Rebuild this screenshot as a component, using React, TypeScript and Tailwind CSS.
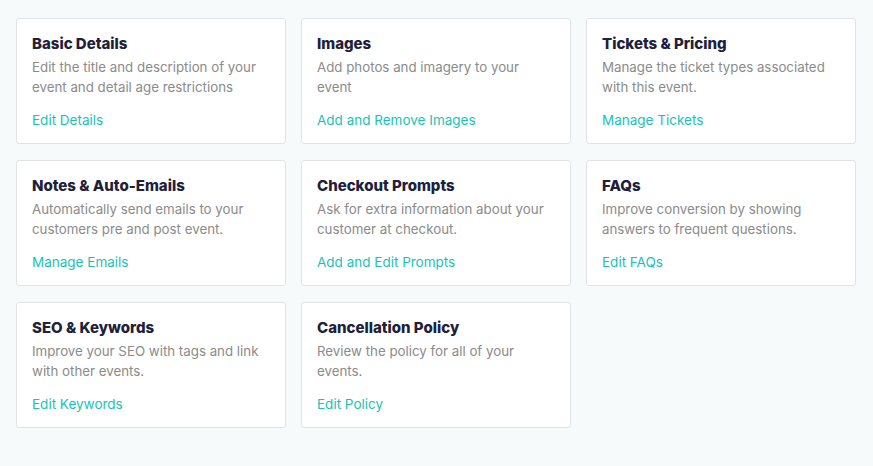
import React from "react";

const cards = [
  { t: "Basic Details", d: "Edit the title and description of your event and detail age restrictions", l: "Edit Details" },
  { t: "Images", d: "Add photos and imagery to your event", l: "Add and Remove Images" },
  { t: "Tickets & Pricing", d: "Manage the ticket types associated with this event.", l: "Manage Tickets" },
  { t: "Notes & Auto-Emails", d: "Automatically send emails to your customers pre and post event.", l: "Manage Emails" },
  { t: "Checkout Prompts", d: "Ask for extra information about your customer at checkout.", l: "Add and Edit Prompts" },
  { t: "FAQs", d: "Improve conversion by showing answers to frequent questions.", l: "Edit FAQs" },
  { t: "SEO & Keywords", d: "Improve your SEO with tags and link with other events.", l: "Edit Keywords" },
  { t: "Cancellation Policy", d: "Review the policy for all of your events.", l: "Edit Policy" },
];

export default function App() {
  return (
    <div className="w-[873px] h-[466px] bg-[#f7fafb] pl-4 pt-[18px] font-['Inter',sans-serif]">
      <div className="grid grid-cols-[270px_270px_270px] gap-x-[15px] gap-y-4">
        {cards.map((c) => (
          <div key={c.t} className="h-[126px] rounded-[3px] border border-[#e1e4e7] bg-white px-[15px] pt-[15px] flex flex-col">
            <div className="text-[15px] leading-5 font-extrabold text-[#20203a]">{c.t}</div>
            <div className="mt-[3px] text-[13.3px] leading-5 text-[#8b8b8b]">{c.d}</div>
            <div className="mt-[13px] text-[13.5px] leading-5 text-[#17c3b8]">{c.l}</div>
          </div>
        ))}
      </div>
    </div>
  );
}
